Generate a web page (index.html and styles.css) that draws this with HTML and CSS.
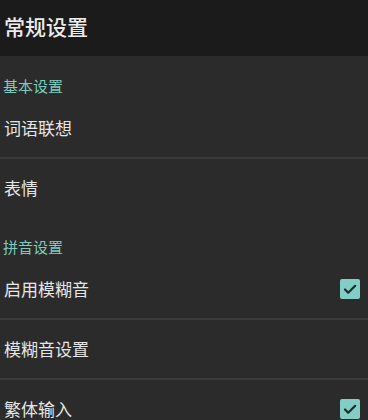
FILE: index.html
```html
<!DOCTYPE html>
<html lang="zh-CN">
<head>
<meta charset="utf-8">
<title>常规设置</title>
<link rel="stylesheet" href="styles.css">
</head>
<body>
<div class="app">
  <header class="toolbar"><h1 class="title">常规设置</h1></header>
  <div class="list">
    <div class="category">基本设置</div>
    <div class="item"><span class="label">词语联想</span></div>
    <div class="divider"></div>
    <div class="item"><span class="label">表情</span></div>
    <div class="category">拼音设置</div>
    <div class="item"><span class="label">启用模糊音</span>
      <span class="check"><svg viewBox="0 0 20 20" width="20" height="20"><path d="M5 10.5l3.2 3.2L15.2 6.8" fill="none" stroke="#1e2b2a" stroke-width="2.2" stroke-linecap="round" stroke-linejoin="round"/></svg></span>
    </div>
    <div class="divider"></div>
    <div class="item"><span class="label">模糊音设置</span></div>
    <div class="divider"></div>
    <div class="item"><span class="label">繁体输入</span>
      <span class="check"><svg viewBox="0 0 20 20" width="20" height="20"><path d="M5 10.5l3.2 3.2L15.2 6.8" fill="none" stroke="#1e2b2a" stroke-width="2.2" stroke-linecap="round" stroke-linejoin="round"/></svg></span>
    </div>
  </div>
</div>
</body>
</html>
```
FILE: styles.css
```css
html, body {
  margin: 0;
  padding: 0;
  background: #2b2b2b;
  font-family: "Noto Sans CJK SC", "Noto Sans", sans-serif;
  overflow: hidden;
}
.app {
  width: 368px;
  height: 420px;
  display: flex;
  flex-direction: column;
}
.toolbar {
  height: 56px;
  flex: none;
  background: #1b1b1b;
  display: flex;
  align-items: center;
  padding-left: 4px;
}
.title {
  margin: 0;
  font-size: 21px;
  font-weight: 500;
  color: #ececec;
  line-height: 28px;
  margin-top: -4px;
}
.list {
  display: flex;
  flex-direction: column;
}
.category {
  height: 43px;
  box-sizing: border-box;
  padding: 20px 0 3px 3px;
  line-height: 20px;
  font-size: 15px;
  color: #7ccbbd;
}
.item {
  height: 58px;
  flex: none;
  display: flex;
  align-items: center;
  justify-content: space-between;
  padding: 0 8px 0 4px;
}
.label {
  font-size: 17px;
  color: #e6e6e6;
  line-height: 24px;
}
.divider {
  height: 2px;
  flex: none;
  background: #3a3a3a;
}
.check {
  width: 20px;
  height: 20px;
  border-radius: 2px;
  background: #82cdc6;
  display: flex;
}
```
